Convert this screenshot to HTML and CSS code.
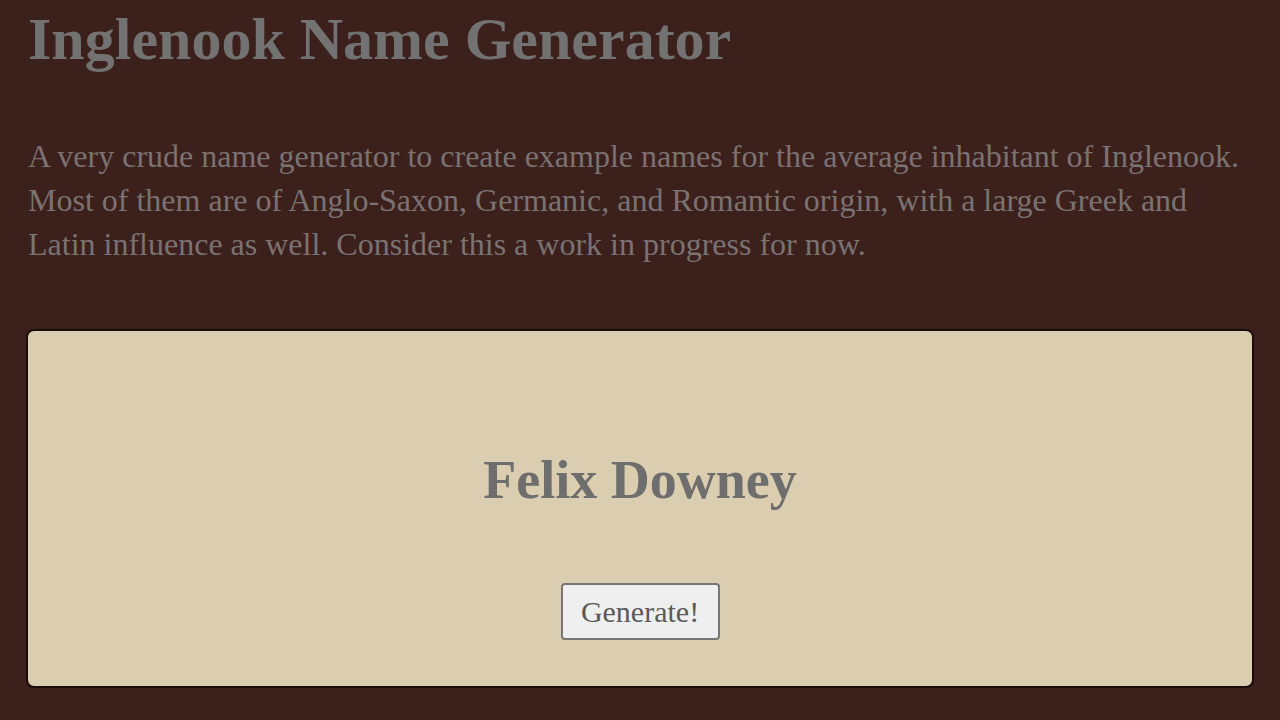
FILE: index.html
```html
<!DOCTYPE html>
<html lang="en">
<head>
  <meta charset="UTF-8">
  <meta name="viewport" content="width=device-width, initial-scale=1.0">
  <title>Inglenook Name Generator</title>
  <link rel="stylesheet" href="styles.css">
</head>
<body>
  <h1 class="title">Inglenook Name Generator</h1>
  <p class="intro">A very crude name generator to create example names for the average inhabitant of Inglenook. Most of them are of Anglo-Saxon, Germanic, and Romantic origin, with a large Greek and Latin influence as well. Consider this a work in progress for now.</p>

  <!-- Generator card -->
  <div class="generator">
    <h2 class="name" id="name">Felix Downey</h2>
    <button class="generate-btn">Generate!</button>
  </div>
</body>
</html>
```

FILE: styles.css
```css
body {
  margin: 0;
  padding: 0 26px;
  background-color: #3c201c; /* dark brown */
  font-family: "Liberation Serif", "DejaVu Serif", serif;
  color: #727272;
}

.title {
  margin: 0;
  padding-top: 4px;
  padding-left: 2px;
  font-size: 60px;
  line-height: 70px;
  font-weight: bold;
  color: #727272;
}

.intro {
  margin: 60px 0 0 2px;
  font-size: 32px;
  line-height: 44px;
  color: #7b7272;
}

.generator {
  margin-top: 63px;
  height: 355px;
  background-color: #dbcdb0;
  border: 2px solid #1a0d0b;
  border-radius: 8px;
  display: flex;
  flex-direction: column;
  align-items: center;
}

.name {
  margin: 116px 0 0 0;
  font-size: 54px;
  line-height: 66px;
  font-weight: bold;
  color: #6e6e6e;
}

.generate-btn {
  margin-top: 70px;
  width: 159px;
  height: 57px;
  font-family: "Liberation Serif", "DejaVu Serif", serif;
  font-size: 30px;
  color: #5a5a5a;
  background-color: #efefef;
  border: 2px solid #767676;
  border-radius: 4px;
  cursor: pointer;
}
```
